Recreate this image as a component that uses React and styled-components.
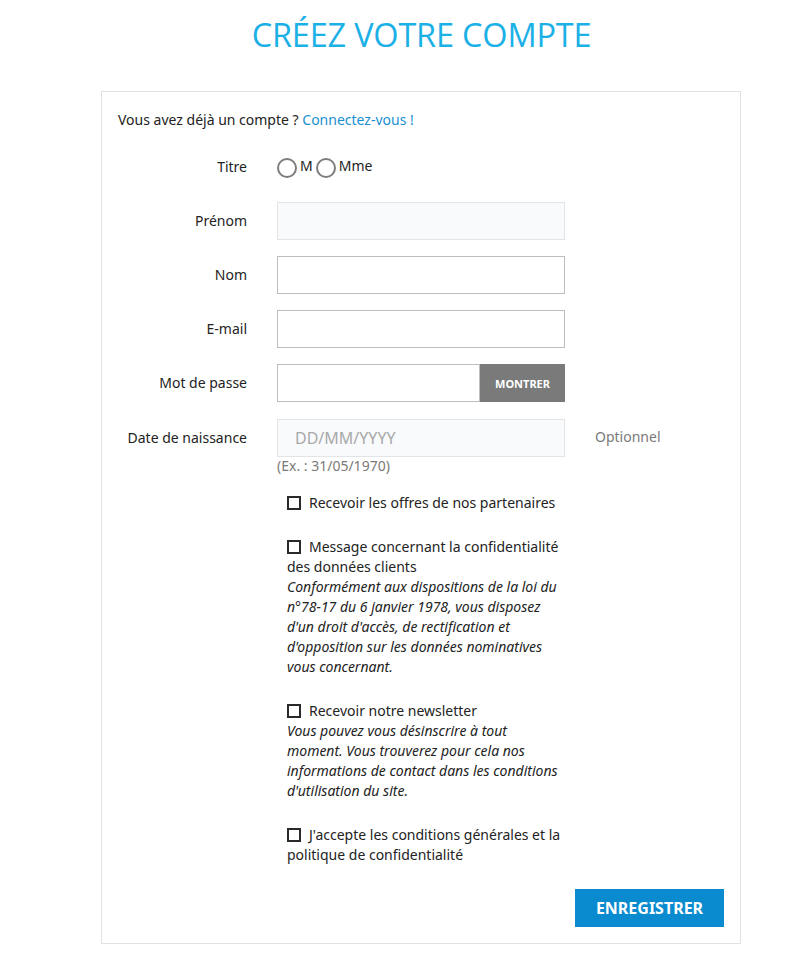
import React from "react";
import styled, { createGlobalStyle } from "styled-components";

const GlobalStyle = createGlobalStyle`
    body {
        margin: 0;
        background: #fff;
        font-family: "Noto Sans", "Open Sans", sans-serif;
        color: #232323;
    }
`;

const Page = styled.div`
    width: 809px;
    padding-top: 14px;
`;

const Title = styled.h1`
    margin: 0 0 35px;
    padding-left: 34px;
    text-align: center;
    font-family: "Open Sans", "Noto Sans", sans-serif;
    font-weight: 400;
    font-size: 32.5px;
    line-height: 42px;
    color: #1bb0e6;
    letter-spacing: -0.2px;
`;

const Card = styled.div`
    margin-left: 101px;
    width: 640px;
    border: 1px solid #e1e1e1;
    padding: 18px 16px 16px;
    box-sizing: border-box;
    font-size: 14px;
`;

const Intro = styled.p`
    margin: 0 0 18px;
    line-height: 20px;
    a {
        color: #1a8fcf;
        text-decoration: none;
    }
`;

const Row = styled.div`
    display: grid;
    grid-template-columns: 129px 288px auto;
    column-gap: 30px;
    align-items: ${(p) => (p.$top ? "start" : "center")};
    margin-bottom: ${(p) => p.$gap ?? 16}px;
`;

const Label = styled.label`
    text-align: right;
    line-height: 38px;
    white-space: nowrap;
`;

const Field = styled.div`
    display: flex;
    flex-direction: column;
`;

const Input = styled.input`
    box-sizing: border-box;
    width: ${(p) => p.$width ?? 288}px;
    height: 38px;
    padding: 0 17px;
    font-family: inherit;
    font-size: 16px;
    border: 1px solid ${(p) => (p.$muted ? "#e2e5e8" : "#bdbdbd")};
    background: ${(p) => (p.$muted ? "#f8fafc" : "#fff")};
    outline: none;
    &::placeholder {
        color: #a9a9a9;
    }
`;

const InputGroup = styled.div`
    display: flex;
`;

const ShowButton = styled.button`
    width: 85px;
    height: 38px;
    border: none;
    background: #7a7a7a;
    color: #fff;
    font-family: inherit;
    font-size: 11px;
    font-weight: 700;
`;

const Hint = styled.span`
    font-size: 14px;
    line-height: ${(p) => (p.$tall ? 36 : 18)}px;
    color: #7a7a7a;
`;

const Radios = styled.div`
    display: flex;
    align-items: center;
    height: 38px;
    gap: 3px;
    margin-top: -1px;
`;

const RadioOption = styled.label`
    display: flex;
    align-items: center;
    gap: 3px;
    line-height: 20px;
    margin-top: -2px;
`;

const RadioCircle = styled.span`
    width: 20px;
    height: 20px;
    box-sizing: border-box;
    border: 2px solid #7d7d7d;
    border-radius: 50%;
    margin-top: 4px;
`;

const Checks = styled.div`
    margin-left: 169px;
    width: 276px;
    display: flex;
    flex-direction: column;
    gap: 24px;
`;

const CheckItem = styled.div`
    line-height: 20px;
`;

const Box = styled.span`
    display: inline-block;
    width: 14px;
    height: 14px;
    border: 2px solid #2a2a2a;
    box-sizing: border-box;
    vertical-align: -2px;
    margin-right: 8px;
`;

const Note = styled.div`
    font-style: italic;
`;

const Footer = styled.div`
    display: flex;
    justify-content: flex-end;
    margin-top: 24px;
`;

const Submit = styled.button`
    width: 149px;
    height: 38px;
    border: none;
    background: #0a8bd0;
    color: #fff;
    font-family: inherit;
    font-size: 16px;
    font-weight: 700;
`;

const App = () => (
    <Page>
        <GlobalStyle />
        <Title>CRÉEZ VOTRE COMPTE</Title>
        <Card>
            <Intro>
                Vous avez déjà un compte ? <a href="#">Connectez-vous !</a>
            </Intro>
            <Row>
                <Label>Titre</Label>
                <Radios>
                    <RadioOption>
                        <RadioCircle />M
                    </RadioOption>
                    <RadioOption>
                        <RadioCircle />Mme
                    </RadioOption>
                </Radios>
            </Row>
            <Row>
                <Label>Prénom</Label>
                <Input $muted />
            </Row>
            <Row>
                <Label>Nom</Label>
                <Input />
            </Row>
            <Row>
                <Label>E-mail</Label>
                <Input />
            </Row>
            <Row $gap={17}>
                <Label>Mot de passe</Label>
                <InputGroup>
                    <Input $width={203} />
                    <ShowButton>MONTRER</ShowButton>
                </InputGroup>
            </Row>
            <Row $top $gap={18}>
                <Label>Date de naissance</Label>
                <Field>
                    <Input $muted placeholder="DD/MM/YYYY" />
                    <Hint>(Ex. : 31/05/1970)</Hint>
                </Field>
                <Hint $tall>Optionnel</Hint>
            </Row>
            <Checks>
                <CheckItem>
                    <Box />Recevoir les offres de nos partenaires
                </CheckItem>
                <CheckItem>
                    <Box />Message concernant la confidentialité des données clients
                    <Note>
                        Conformément aux dispositions de la loi du n°78-17 du 6 janvier 1978, vous disposez
                        d'un droit d'accès, de rectification et d'opposition sur les données nominatives
                        vous concernant.
                    </Note>
                </CheckItem>
                <CheckItem>
                    <Box />Recevoir notre newsletter
                    <Note>
                        Vous pouvez vous désinscrire à tout moment. Vous trouverez pour cela nos
                        informations de contact dans les conditions d'utilisation du site.
                    </Note>
                </CheckItem>
                <CheckItem>
                    <Box />J'accepte les conditions générales et la politique de confidentialité
                </CheckItem>
            </Checks>
            <Footer>
                <Submit>ENREGISTRER</Submit>
            </Footer>
        </Card>
    </Page>
);

export default App;
